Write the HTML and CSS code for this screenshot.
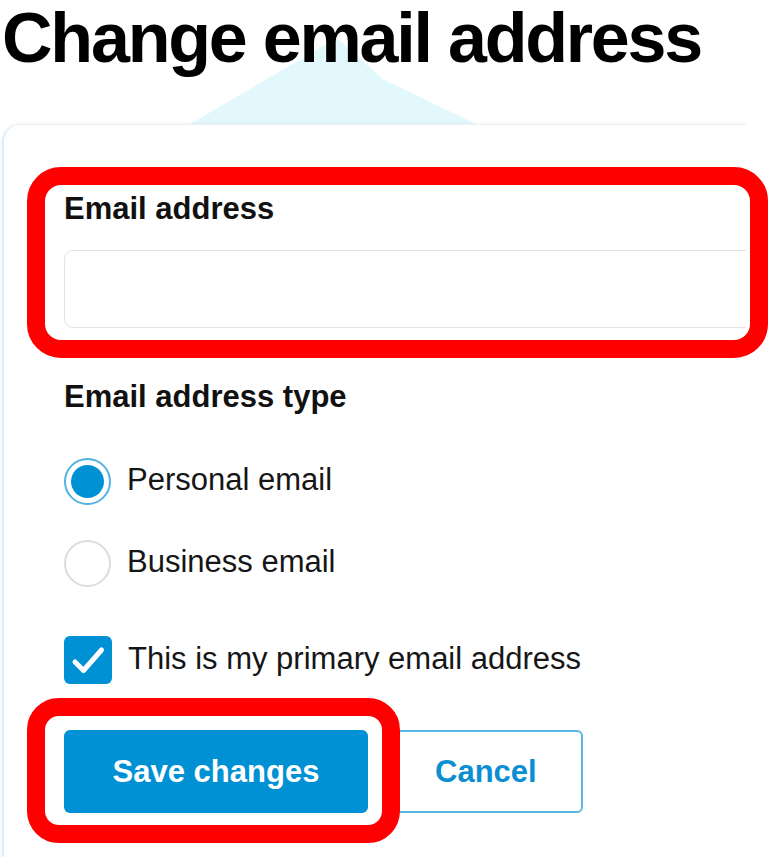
FILE: index.html
```html
<!DOCTYPE html>
<html lang="en">
<head>
<meta charset="utf-8">
<title>Change email address</title>
<link rel="stylesheet" href="styles.css">
</head>
<body>
<div class="page">
  <div class="peak"></div>
  <h1 class="title">Change email address</h1>
  <div class="card">
    <form class="form">
      <label class="field-label" for="email">Email address</label>
      <input class="input" id="email" type="text">
      <div class="group-label">Email address type</div>
      <div class="option option-first">
        <span class="radio radio-on"><span class="radio-dot"></span></span>
        <span class="opt-text">Personal email</span>
      </div>
      <div class="option option-second">
        <span class="radio"></span>
        <span class="opt-text">Business email</span>
      </div>
      <div class="option option-check">
        <span class="checkbox">
          <svg class="check" viewBox="0 0 48 48" width="48" height="48"><path d="M11 26 L19.5 34.5 L37.5 14" fill="none" stroke="#fff" stroke-width="5" stroke-linecap="round" stroke-linejoin="round"/></svg>
        </span>
        <span class="opt-text opt-text-check">This is my primary email address</span>
      </div>
      <div class="actions">
        <button type="button" class="btn btn-primary">Save changes</button>
        <button type="button" class="btn btn-secondary">Cancel</button>
      </div>
    </form>
  </div>
  <div class="mark mark-field"></div>
  <div class="mark mark-save"></div>
</div>
</body>
</html>
```

FILE: styles.css
```css
html, body {
  margin: 0;
  padding: 0;
  background: #ffffff;
}

body {
  font-family: "Liberation Sans", Arial, sans-serif;
  color: #111111;
  overflow: hidden;
}

.page {
  position: relative;
  width: 768px;
  height: 857px;
  overflow: hidden;
}

.peak {
  position: absolute;
  left: 190px;
  top: 38px;
  width: 286px;
  height: 86px;
  background: #e2f8fd;
  clip-path: polygon(51.4% 0, 67.5% 48%, 100% 100%, 0 100%);
}

.title {
  position: relative;
  z-index: 1;
  margin: 0;
  padding-left: 2px;
  font-size: 70px;
  letter-spacing: -2.2px;
  line-height: 76px;
  font-weight: 700;
  color: #000000;
  white-space: nowrap;
}

.card {
  position: relative;
  z-index: 1;
  margin-top: 48px;
  margin-left: 2px;
  width: 744px;
  height: 900px;
  box-sizing: border-box;
  background: #ffffff;
  border-top: 1px solid #f0f0f0;
  border-left: 2px solid #dcf0fa;
  border-top-left-radius: 18px;
  box-shadow: -1px -1px 3px rgba(0, 0, 0, 0.04);
  padding: 66px 0 0 60px;
  overflow: hidden;
}

.form {
  display: flex;
  flex-direction: column;
  align-items: flex-start;
}

.field-label,
.group-label {
  display: block;
  font-size: 31px;
  line-height: 36px;
  font-weight: 700;
  color: #111111;
}

.input {
  display: block;
  margin-top: 23px;
  width: 720px;
  height: 78px;
  box-sizing: border-box;
  border: 1px solid #e2e2e2;
  border-radius: 9px;
  background: #ffffff;
  font: inherit;
  outline: none;
}

.group-label {
  margin-top: 51px;
}

.option {
  display: flex;
  align-items: flex-start;
  gap: 16px;
}

.option-first {
  margin-top: 43px;
}

.option-second {
  margin-top: 35px;
}

.option-check {
  margin-top: 49px;
}

.radio {
  flex: none;
  width: 47px;
  height: 47px;
  box-sizing: border-box;
  border: 2px solid #dcdcdc;
  border-radius: 50%;
  display: flex;
  align-items: center;
  justify-content: center;
  background: #ffffff;
}

.radio-on {
  border-color: #52b3e3;
}

.radio-dot {
  width: 33px;
  height: 33px;
  border-radius: 50%;
  background: #0090d4;
}

.checkbox {
  flex: none;
  width: 48px;
  height: 48px;
  border-radius: 6px;
  background: #0090d4;
  display: block;
}

.check {
  display: block;
}

.opt-text {
  font-size: 31px;
  line-height: 36px;
  color: #161616;
  margin-top: 4px;
  white-space: nowrap;
}

.opt-text-check {
  margin-top: 5px;
}

.actions {
  margin-top: 46px;
  display: flex;
  gap: 17px;
}

.btn {
  height: 83px;
  box-sizing: border-box;
  padding: 0 48px;
  border-radius: 6px;
  font-family: "Liberation Sans", Arial, sans-serif;
  font-size: 31px;
  font-weight: 700;
  cursor: pointer;
}

.btn-primary {
  width: 304px;
  background: #0091d4;
  border: none;
  color: #ffffff;
}

.btn-secondary {
  width: 198px;
  background: #ffffff;
  border: 2px solid #5ab7e4;
  color: #0b8fd2;
}

.mark {
  position: absolute;
  z-index: 2;
  box-sizing: border-box;
  border: 18px solid #ff0000;
  pointer-events: none;
}

.mark-field {
  left: 27px;
  top: 167px;
  width: 741px;
  height: 191px;
  border-radius: 34px;
}

.mark-save {
  left: 27px;
  top: 698px;
  width: 373px;
  height: 145px;
  border-radius: 32px;
}
```
